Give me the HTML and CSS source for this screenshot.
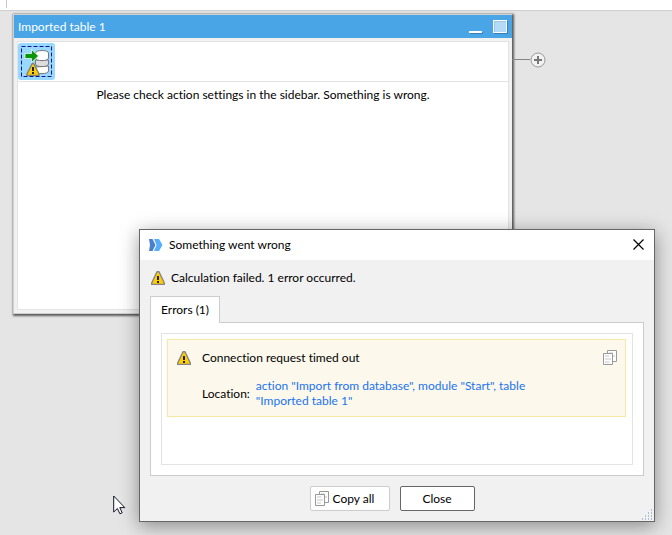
FILE: index.html
```html
<!DOCTYPE html>
<html lang="en">
<head>
    <meta charset="UTF-8">
    <meta name="viewport" content="width=device-width, initial-scale=1.0">
    <title>Imported table 1</title>
    <link rel="stylesheet" href="styles.css">
</head>
<body>
    <svg class="defs" width="0" height="0" aria-hidden="true">
        <symbol id="warning" viewBox="0 0 14 14">
            <path d="M6 .8h2L13.3 12v1.4H.7V12z" fill="#ffcd05" stroke="#858585" stroke-width="1.4" stroke-linejoin="round"/>
            <path d="M6 5h2v4H6zM6 10h2v2H6z" fill="#222"/>
        </symbol>
        <symbol id="copy" viewBox="0 0 14 15">
            <path d="M4.500.5h9v11h-9z" fill="#fff" stroke="#999"/>
            <path d="M6 2h4v1H6zM10 5h2v2h-2z" fill="#e2e2e2"/>
            <path d="M.5 3.500h9v11h-9z" fill="#fff" stroke="#999"/>
            <path d="M2 5h4v2H2zM2 8h6v2H2zM2 11h4v2H2z" fill="#e2e2e2"/>
        </symbol>
    </svg>

    <div class="toolbar"></div>

    <main class="canvas">
        <section class="table-window">
            <header class="table-title">
                <h1>Imported table 1</h1>
                <button class="title-button" type="button" aria-label="Minimize">
                    <svg width="14" height="14" viewBox="0 0 14 14">
                        <path d="M1 12h13v2H1z" fill="#3a7fb4"/>
                        <path d="M0 11h13v2H0z" fill="#fff"/>
                    </svg>
                </button>
                <button class="title-button" type="button" aria-label="Maximize">
                    <svg width="15" height="14" viewBox="0 0 15 14">
                        <path d="M1 1h14v13H1z" fill="#3a7fb4"/>
                        <path d="M0 0h14v13H0z" fill="#fff"/>
                        <path d="M1 1h12v11H1z" fill="#9fc6e5"/>
                        <path d="M2 2h11v10H2z" fill="#b5daf6"/>
                    </svg>
                </button>
            </header>
            <div class="table-frame">
                <div class="table-panel">
                    <div class="actions">
                        <button class="action selected" type="button" aria-label="Import from database">
                            <svg width="37" height="37" viewBox="0 0 37 37">
                                <path d="M3.500 3.500h30v30h-30z" fill="none" stroke="#0d1391" stroke-dasharray="4 2"/>
                                <g stroke="#777" fill="#fff">
                                    <path d="M17.500 24v4c0 3.500 13 3.500 13 0v-5z"/>
                                    <path d="M17.500 17v4c0 3.500 13 3.500 13 0v-4z" fill="#ddd"/>
                                    <path d="M17.500 10v5c0 3.500 13 3.500 13 0v-5c0-3.300-13-3.300-13 0z"/>
                                </g>
                                <path d="M7 10.500h6.500v-4l7 6.500-7 6.500v-4H7z" fill="#0c960c" stroke="#fff" stroke-width=".7"/>
                                <path d="M14.300 20.500h1.400L21 31v1.400H9V31z" fill="#ffcd05" stroke="#85806a" stroke-width="1.400" stroke-linejoin="round"/>
                                <path d="M14 24h2v4h-2zM14 29h2v2h-2z" fill="#222"/>
                            </svg>
                        </button>
                    </div>
                    <p class="table-message">Please check action settings in the sidebar. Something is wrong.</p>
                </div>
            </div>
            <button class="connector" type="button" aria-label="Add table">
                <svg width="34" height="16" viewBox="0 0 34 16">
                    <path d="M0 7.500h18" stroke="#858585"/>
                    <circle cx="26" cy="8" r="7" fill="#f2f2f2" stroke="#999"/>
                    <path d="M22 8h8M26 4v8" stroke="#777" stroke-width="2"/>
                </svg>
            </button>
        </section>

        <section class="dialog" role="dialog" aria-labelledby="dialog-title">
            <header class="dialog-title">
                <svg width="14" height="12" viewBox="0 0 14 12">
                    <path d="M0 0h3.500l3 6-3 6H0l1-6z" fill="#4b7fcd"/>
                    <path d="M5 0h5l3.500 6-3.500 6H5l2.500-6z" fill="#56aefa"/>
                </svg>
                <h2 id="dialog-title">Something went wrong</h2>
                <button class="dialog-close" type="button" aria-label="Close dialog">
                    <svg width="11" height="11" viewBox="0 0 11 11">
                        <path d="M.5.5l10 10M10.500.5l-10 10" stroke="#000" stroke-width="1.200"/>
                    </svg>
                </button>
            </header>
            <div class="dialog-body">
                <p class="summary">
                    <svg width="14" height="14"><use href="#warning"/></svg>
                    Calculation failed. 1 error occurred.
                </p>
                <div role="tablist">
                    <button class="tab" type="button" role="tab" aria-selected="true">Errors (1)</button>
                </div>
                <div class="tab-panel" role="tabpanel">
                    <div class="error-list">
                        <article class="error">
                            <svg class="error-icon" width="14" height="14"><use href="#warning"/></svg>
                            <div class="error-text">
                                <h3>Connection request timed out</h3>
                                <div class="location">
                                    <span>Location:</span>
                                    <a href="#">action "Import from database", module "Start", table "Imported table 1"</a>
                                </div>
                            </div>
                            <button class="copy-error" type="button" aria-label="Copy error">
                                <svg width="14" height="15"><use href="#copy"/></svg>
                            </button>
                        </article>
                    </div>
                </div>
                <footer class="dialog-buttons">
                    <button class="button" type="button">
                        <svg width="14" height="15"><use href="#copy"/></svg>
                        Copy all
                    </button>
                    <button class="button default" type="button">Close</button>
                </footer>
            </div>
            <svg class="grip" width="11" height="11" viewBox="0 0 11 11">
                <path d="M9 0h1v2H9zM6 3h1v2H6zM9 3h1v2H9zM3 6h1v2H3zM6 6h1v2H6zM9 6h1v2H9zM0 9h1v2H0zM3 9h1v2H3zM6 9h1v2H6zM9 9h1v2H9z" fill="#b0bcd4"/>
            </svg>
        </section>

        <svg class="cursor" width="13" height="20" viewBox="0 0 13 20">
            <path d="M.7 1v16l3.700-3.500 2.500 5.300 2.300-1-2.400-5.200h5z" fill="#fff" stroke="#14142a"/>
        </svg>
    </main>
</body>
</html>
```

FILE: styles.css
```css
* {
    box-sizing: border-box;
}

body {
    display: flex;
    flex-direction: column;
    min-height: 100vh;
    margin: 0;
    background-color: #e5e5e5;
    font-family: Lato, "Open Sans", sans-serif;
    font-size: 12px;
    font-variant-ligatures: none;
    line-height: 16px;
    color: #000;
}

h1, h2, h3, p {
    margin: 0;
    font-size: 12px;
    font-weight: normal;
}

button {
    padding: 0;
    border: none;
    background: none;
    font: inherit;
    font-variant-ligatures: none;
    color: inherit;
}

svg {
    display: block;
    flex: none;
}

.defs {
    position: absolute;
}

.toolbar {
    height: 11px;
    padding-left: 6px;
    border-bottom: 1px solid #cfcfcf;
    background-color: #fff;
}

.toolbar::before {
    content: "";
    display: block;
    width: 1px;
    height: 8px;
    background-color: #c8c8c8;
}

.canvas {
    position: relative;
    flex: 1;
    overflow: hidden;
}

/* Table on the canvas */
.table-window {
    position: absolute;
    top: 3px;
    left: 13px;
    right: 160px;
    border: 1px solid #cfcfcf;
    border-right: none;
    background-color: #f1f1f1;
    box-shadow: 1px 1px 2px 1px rgba(0, 0, 0, 0.6);
}

.table-title {
    display: flex;
    align-items: center;
    gap: 10px;
    height: 23px;
    padding: 0 4px;
    background-color: #4aa5e7;
    color: #fff;
}

.table-title h1 {
    flex: 1;
}

.table-frame {
    padding: 3px;
}

.table-panel {
    min-height: 269px;
    border: 1px solid #e3e3e3;
    background-color: #fff;
}

.actions {
    padding: 1px 0;
    border-bottom: 1px solid #e3e3e3;
}

.action {
    display: block;
    border-radius: 3px;
}

.action.selected {
    background-color: #99d8ff;
}

.table-message {
    padding: 5px;
    text-align: center;
}

.connector {
    position: absolute;
    top: 37px;
    left: 100%;
}

/* Error dialog */
.dialog {
    position: absolute;
    top: 218px;
    left: 139px;
    right: 17px;
    border: 1px solid #666;
    background-color: #f1f1f1;
    box-shadow: 0 4px 18px rgba(0, 0, 0, 0.4);
}

.dialog-title {
    display: flex;
    align-items: center;
    gap: 6px;
    height: 30px;
    padding: 0 10px 0 9px;
    background-color: #fff;
}

.dialog-title h2 {
    flex: 1;
}

.dialog-close {
    padding-bottom: 2px;
}

.dialog-body {
    padding: 10px;
}

.summary {
    display: flex;
    align-items: center;
    gap: 6px;
    padding: 0 1px;
    margin-bottom: 10px;
}

.tab {
    display: block;
    position: relative;
    height: 27px;
    padding: 0 10px;
    border: 1px solid #ccc;
    border-bottom: none;
    margin-bottom: -1px;
    background-color: #fff;
}

.tab-panel {
    padding: 10px;
    border: 1px solid #ccc;
    background-color: #fff;
}

.error-list {
    min-height: 132px;
    padding: 5px 6px 5px 5px;
    border: 1px solid #e3e3e3;
}

.error {
    display: flex;
    align-items: flex-start;
    gap: 11px;
    padding: 10px 8px 8px;
    border: 1px solid #f7e8a4;
    background-color: #fcf9ec;
}

.error-icon {
    margin: 1px 0 0 1px;
}

.error-text {
    flex: 1;
}

.location {
    display: flex;
    align-items: center;
    gap: 6px;
    margin-top: 12px;
    line-height: 15px;
}

.location a {
    max-width: 300px;
    color: #1a73f0;
    text-decoration: none;
}

.dialog-buttons {
    display: flex;
    justify-content: center;
    gap: 10px;
    padding-top: 10px;
    padding-right: 10px;
}

.button {
    display: flex;
    align-items: center;
    gap: 4px;
    min-width: 80px;
    height: 25px;
    padding: 0 4px;
    border: 1px solid #ccc;
    border-radius: 2px;
    background-color: #fff;
}

.button.default {
    justify-content: center;
    min-width: 75px;
    border-color: #666;
}

.grip {
    position: absolute;
    right: 1px;
    bottom: 1px;
}

.cursor {
    position: absolute;
    top: 484px;
    left: 113px;
}
```
